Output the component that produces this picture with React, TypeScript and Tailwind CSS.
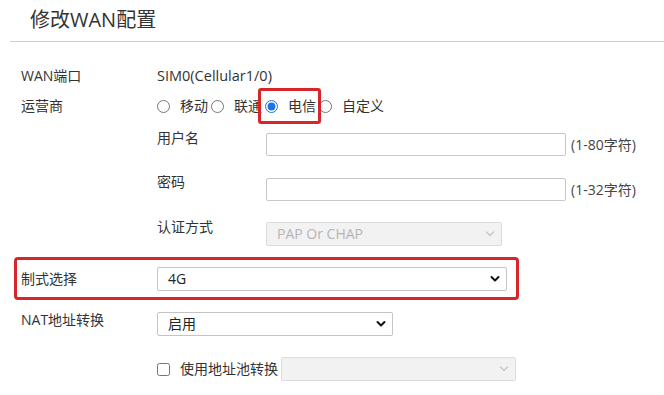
import React from "react";

const FONT = "font-['Open_Sans','Noto_Sans_CJK_SC',sans-serif]";

function Chevron({ disabled }: { disabled?: boolean }): React.ReactElement {
  return (
    <svg
      width="10"
      height="7"
      viewBox="0 0 10 7"
      className="pointer-events-none absolute right-[7px] top-1/2 -translate-y-1/2"
    >
      <path
        d="M1.5 1.5 L5 5 L8.5 1.5"
        fill="none"
        stroke={disabled ? "#c4c4c4" : "#111"}
        strokeWidth={disabled ? 1.2 : 2}
        strokeLinecap="round"
        strokeLinejoin="round"
      />
    </svg>
  );
}

interface SelectBoxProps {
  readonly value: string;
  readonly width: string;
  readonly disabled?: boolean;
}

function SelectBox({ value, width, disabled }: SelectBoxProps): React.ReactElement {
  return (
    <div className={`relative h-[24px] ${width}`}>
      <select
        disabled={disabled}
        defaultValue={value}
        className={`h-full w-full appearance-none rounded-[2px] border px-[10px] text-[14px] outline-none ${
          disabled ? "border-[#dcdcdc] bg-[#f2f2f2] text-[#b5b5b5]" : "border-[#c4c4c4] bg-white text-[#222]"
        }`}
      >
        <option value={value}>{value}</option>
      </select>
      <Chevron disabled={disabled} />
    </div>
  );
}

function TextField(): React.ReactElement {
  return (
    <input
      type="text"
      className="h-[23px] w-[300px] rounded-[2px] border border-[#c8c8c8] bg-white px-2 text-[14px] outline-none"
    />
  );
}

const carriers = [
  { name: "移动", checked: false },
  { name: "联通", checked: false },
  { name: "电信", checked: true },
  { name: "自定义", checked: false },
];

export default function App(): React.ReactElement {
  return (
    <div className={`relative h-[395px] w-[664px] overflow-hidden bg-white text-[14px] leading-[20px] text-[#333] ${FONT}`}>
      <div className="h-[41px] pl-[30px] pt-[7px] text-[20px] leading-[26px] text-[#333]">修改WAN配置</div>
      <div className="ml-[10px] h-px bg-[#cfcfcf]" />

      <div className="pl-[21px] pt-[19px]">
        <div className="flex h-[30px] items-center">
          <div className="w-[136px]">WAN端口</div>
          <div className="text-[14.5px]">SIM0(Cellular1/0)</div>
        </div>

        <div className="flex h-[30px] items-center">
          <div className="w-[136px]">运营商</div>
          <div className="flex items-center">
            {carriers.map((c, i) => (
              <label key={c.name} className={`flex items-center ${i > 0 ? "ml-[3px]" : ""}`}>
                <input
                  type="radio"
                  name="carrier"
                  defaultChecked={c.checked}
                  className="m-0 h-[13px] w-[13px] accent-[#1a73e8]"
                />
                <span className="ml-[10px]">{c.name}</span>
              </label>
            ))}
          </div>
        </div>

        <div className="pl-[136px] pt-[7px]">
          <div className="flex h-[44px] items-start">
            <div className="w-[109px]">用户名</div>
            <div className="mt-[5px] flex items-center">
              <TextField />
              <span className="ml-[5px] text-[#444]">(1-80字符)</span>
            </div>
          </div>
          <div className="flex h-[45px] items-start">
            <div className="w-[109px]">密码</div>
            <div className="mt-[6px] flex items-center">
              <TextField />
              <span className="ml-[5px] text-[#444]">(1-32字符)</span>
            </div>
          </div>
          <div className="flex h-[45px] items-start">
            <div className="w-[109px]">认证方式</div>
            <div className="mt-[5px]">
              <SelectBox value="PAP Or CHAP" width="w-[236px]" disabled />
            </div>
          </div>
        </div>

        <div className="flex h-[34px] items-center">
          <div className="w-[136px]">制式选择</div>
          <SelectBox value="4G" width="w-[350px]" />
        </div>

        <div className="mt-[14px] flex h-[45px] items-start">
          <div className="w-[136px]">NAT地址转换</div>
          <div className="mt-[2px]">
            <SelectBox value="启用" width="w-[236px]" />
          </div>
        </div>

        <div className="mt-[2px] flex h-[24px] items-center pl-[136px]">
          <input type="checkbox" className="m-0 h-[13px] w-[13px]" />
          <span className="ml-[10px]">使用地址池转换</span>
          <div className="ml-[3px]">
            <SelectBox value="" width="w-[235px]" disabled />
          </div>
        </div>
      </div>

      <div className="pointer-events-none absolute left-[258px] top-[88px] h-[36px] w-[63px] rounded-[3px] border-[3px] border-[#d7262b]" />
      <div className="pointer-events-none absolute left-[14px] top-[257px] h-[43px] w-[505px] rounded-[4px] border-[3px] border-[#d7262b]" />
    </div>
  );
}
